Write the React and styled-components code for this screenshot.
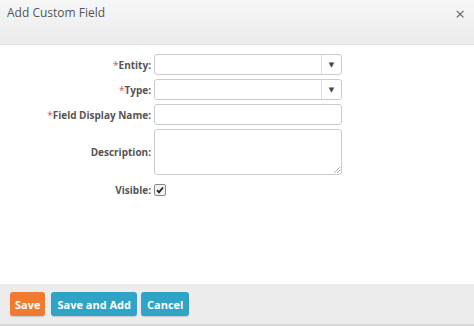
import React from "react";
import styled, { createGlobalStyle } from "styled-components";

const GlobalStyle = createGlobalStyle`
  html, body {
    margin: 0;
    padding: 0;
    background: #fff;
  }
  body {
    font-family: "Open Sans", "DejaVu Sans", sans-serif;
    color: #555;
  }
`;

const Dialog = styled.div`
  width: 474px;
  height: 326px;
  display: flex;
  flex-direction: column;
  background: #fff;
`;

const Header = styled.div`
  height: 45px;
  box-sizing: border-box;
  padding: 4px 9px 0 7px;
  display: flex;
  justify-content: space-between;
  align-items: flex-start;
  background: linear-gradient(#f7f7f7, #ebebeb);
  border-bottom: 1px solid #e2e2e2;
`;

const Title = styled.h3`
  margin: 0;
  font-size: 12px;
  font-weight: 400;
  color: #555;
`;

const Close = styled.span`
  font-size: 17px;
  line-height: 18px;
  color: #666;
  margin-top: 1px;
`;

const Body = styled.div`
  flex: 1;
  padding-top: 9px;
  display: flex;
  flex-direction: column;
  gap: 4px;
`;

const Row = styled.div`
  display: grid;
  grid-template-columns: 151px 188px;
  column-gap: 3px;
  align-items: center;
  margin-top: ${(p) => p.$gap || 0}px;
`;

const Label = styled.label`
  text-align: right;
  font-size: 10px;
  font-weight: 700;
  color: #555;
`;

const Req = styled.span`
  color: #d9534f;
  font-weight: 400;
`;

const Input = styled.div`
  height: 21px;
  box-sizing: border-box;
  border: 1px solid #ccc;
  border-radius: 3px;
  background: #fff;
`;

const Select = styled(Input)`
  display: flex;
  justify-content: flex-end;
`;

const Arrow = styled.div`
  width: 19px;
  border-left: 1px solid #ddd;
  display: flex;
  align-items: center;
  justify-content: center;
  font-size: 7px;
  color: #444;
`;

const TextArea = styled(Input)`
  height: 46px;
  position: relative;
`;

const Grip = styled.svg`
  position: absolute;
  right: 1px;
  bottom: 1px;
`;

const Check = styled.span`
  width: 10px;
  height: 10px;
  border: 1px solid #888;
  border-radius: 2px;
  background: #f2f2f2;
  display: flex;
  align-items: center;
  justify-content: center;
`;

const Footer = styled.div`
  height: 42px;
  box-sizing: border-box;
  background: #ececec;
  border-bottom: 2px solid #d8d8d8;
  display: flex;
  align-items: center;
  gap: 4px;
  padding: 0 0 0 10px;
`;

const Button = styled.button`
  height: 24px;
  padding: 0 ${(p) => (p.$primary ? 5 : 6)}px;
  margin-right: ${(p) => (p.$primary ? 2 : 0)}px;
  border: none;
  border-radius: 3px;
  font-family: "Open Sans", "DejaVu Sans", sans-serif;
  font-size: 11px;
  font-weight: 700;
  color: #fff;
  background: ${(p) => (p.$primary ? "#f07a32" : "#2fa4c6")};
  box-shadow: 0 1px 1px rgba(0, 0, 0, 0.15);
`;

export default function App() {
  return (
    <>
      <GlobalStyle />
      <Dialog>
        <Header>
          <Title>Add Custom Field</Title>
          <Close>×</Close>
        </Header>
        <Body>
          <Row>
            <Label><Req>*</Req>Entity:</Label>
            <Select><Arrow>▼</Arrow></Select>
          </Row>
          <Row>
            <Label><Req>*</Req>Type:</Label>
            <Select><Arrow>▼</Arrow></Select>
          </Row>
          <Row>
            <Label><Req>*</Req>Field Display Name:</Label>
            <Input />
          </Row>
          <Row>
            <Label>Description:</Label>
            <TextArea>
              <Grip width="7" height="7" viewBox="0 0 7 7">
                <path d="M1 7 L7 1 M4 7 L7 4" stroke="#999" strokeWidth="0.8" />
              </Grip>
            </TextArea>
          </Row>
          <Row $gap={4}>
            <Label>Visible:</Label>
            <Check>
              <svg width="8" height="8" viewBox="0 0 8 8">
                <path d="M1 4.2 L3 6.3 L7 1.5" fill="none" stroke="#222" strokeWidth="1.8" />
              </svg>
            </Check>
          </Row>
        </Body>
        <Footer>
          <Button $primary>Save</Button>
          <Button>Save and Add</Button>
          <Button>Cancel</Button>
        </Footer>
      </Dialog>
    </>
  );
}
